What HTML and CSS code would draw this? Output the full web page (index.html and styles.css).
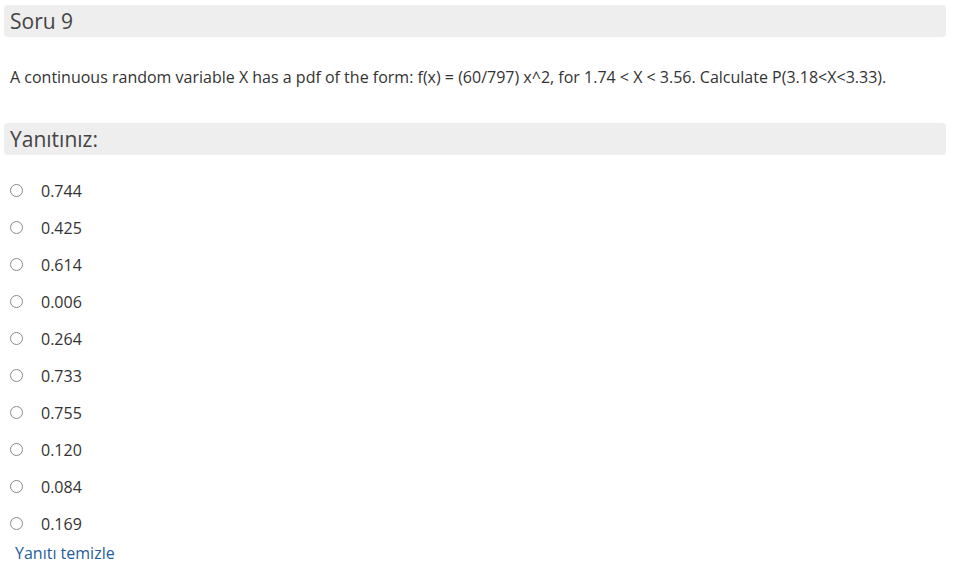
FILE: index.html
```html
<!DOCTYPE html>
<html>
<head>
    <link rel="stylesheet" href="styles.css">
</head>
<body>
    <div class="question">
        <h3 class="q-header">Soru 9</h3>
        <div class="q-text">A continuous random variable X has a pdf of the form: f(x) = (60/797) x^2, for 1.74 &lt; X &lt; 3.56. Calculate P(3.18&lt;X&lt;3.33).</div>

        <h4 class="q-header answer-header">Yanıtınız:</h4>
        <div class="options">
            <label class="option"><span class="radio"></span>0.744</label>
            <label class="option"><span class="radio"></span>0.425</label>
            <label class="option"><span class="radio"></span>0.614</label>
            <label class="option"><span class="radio"></span>0.006</label>
            <label class="option"><span class="radio"></span>0.264</label>
            <label class="option"><span class="radio"></span>0.733</label>
            <label class="option"><span class="radio"></span>0.755</label>
            <label class="option"><span class="radio"></span>0.120</label>
            <label class="option"><span class="radio"></span>0.084</label>
            <label class="option"><span class="radio"></span>0.169</label>
        </div>
        <a class="clear-link" href="#">Yanıtı temizle</a>
    </div>
</body>
</html>
```

FILE: styles.css
```css
body {
    margin: 0;
    background: #fff;
    font-family: "Open Sans", Arial, sans-serif;
    color: #333;
}

.question {
    padding: 5px 10px 0 4px;
}

.q-header {
    margin: 0;
    background: #eee;
    border-radius: 4px;
    height: 32px;
    line-height: 32px;
    padding-left: 6px;
    font-size: 21px;
    font-weight: normal;
    color: #444;
}

.q-text {
    font-size: 16px;
    padding: 29px 0 0 6px;
    height: 57px;
    line-height: 22px;
}

.answer-header {
    margin-top: 0;
}

.options {
    padding: 17px 0 0 6px;
}

.option {
    display: flex;
    align-items: center;
    height: 37px;
    font-size: 16px;
}

.radio {
    width: 11px;
    height: 11px;
    border: 1px solid #8a8a8a;
    border-radius: 50%;
    margin-right: 18px;
}

.clear-link {
    display: block;
    margin: 0 0 0 11px;
    font-size: 16px;
    color: #1f5d9b;
    text-decoration: none;
}
```
